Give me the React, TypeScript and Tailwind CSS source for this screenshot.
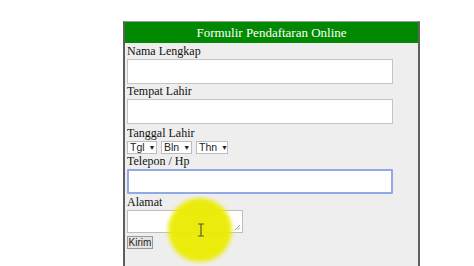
import React from 'react';

const serif = { fontFamily: '"Liberation Serif", "Times New Roman", serif' };
const sans = { fontFamily: '"Liberation Sans", Arial, sans-serif' };

function Field({ label, focused }: { label: string; focused?: boolean }) {
  return (
    <div className="flex flex-col">
      <label className="h-[15px] text-[12px] leading-[14px] text-[#111]">{label}</label>
      <div
        className={
          focused
            ? 'w-[266px] h-[25px] bg-white border-2 border-[#93a8e6] rounded-[1px]'
            : 'w-[266px] h-[25px] bg-white border border-[#c4c4c4]'
        }
      />
    </div>
  );
}

function FakeSelect({ text, width }: { text: string; width: string }) {
  return (
    <div
      className={`${width} h-[13px] bg-white border border-[#bdbdbd] flex items-center gap-[4px] pl-[2px] text-[10.5px] leading-none text-[#222]`}
      style={sans}
    >
      <span>{text}</span>
      <span className="text-[7px]">▼</span>
    </div>
  );
}

export default function App() {
  return (
    <div className="relative w-[474px] h-[266px] bg-white overflow-hidden" style={serif}>
      <div className="ml-[123px] mt-[21px] w-[297px] h-[250px] bg-[#eeeeee] border-x-2 border-t border-[#5f5f5f] border-t-[#9a9a9a]">
        {/* Header */}
        <div className="h-[21px] bg-[#018a01] flex items-center justify-center text-white text-[13px]">
          Formulir Pendaftaran Online
        </div>

        <div className="pl-[2px] pt-[1px] flex flex-col">
          <Field label="Nama Lengkap" />
          <Field label="Tempat Lahir" />

          <label className="mt-[2px] h-[15px] text-[12px] leading-[14px] text-[#111]">Tanggal Lahir</label>
          <div className="flex gap-[4px]">
            <FakeSelect text="Tgl" width="w-[30px]" />
            <FakeSelect text="Bln" width="w-[31px]" />
            <FakeSelect text="Thn" width="w-[32px]" />
          </div>

          <Field label="Telepon / Hp" focused />

          <label className="mt-[1px] h-[15px] text-[12px] leading-[14px] text-[#111]">Alamat</label>
          <div className="relative w-[116px] h-[23px] bg-white border border-[#bdbdbd]">
            <svg className="absolute right-[1px] bottom-[1px]" width="7" height="7" viewBox="0 0 7 7">
              <path d="M6 1L1 6M6 3.5L3.5 6" stroke="#8a8a8a" strokeWidth="0.8" />
            </svg>
          </div>
          <button
            className="mt-[3px] w-[26px] h-[13px] bg-[#e3e3e3] border border-[#9a9a9a] text-[10px] leading-none text-[#222] flex items-center justify-center"
            style={sans}
          >
            Kirim
          </button>
        </div>
      </div>

      {/* Cursor highlight */}
      <div className="absolute left-[168px] top-[198px] w-[64px] h-[64px] rounded-full bg-[#ecec00] opacity-95 blur-[2px]" />
      <svg className="absolute left-[197px] top-[223px]" width="8" height="14" viewBox="0 0 8 14">
        <path d="M1 1h6M4 1v12M1 13h6" stroke="#5a5a3a" strokeWidth="1.2" fill="none" />
      </svg>
    </div>
  );
}
